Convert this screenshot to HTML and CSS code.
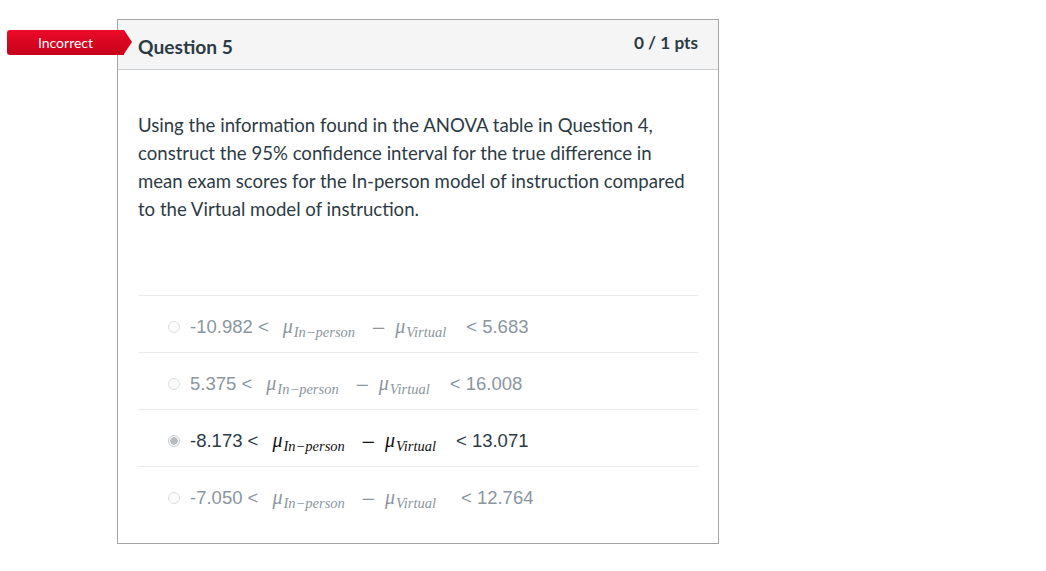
FILE: index.html
```html
<!DOCTYPE html>
<html>
<head>
<meta charset="utf-8">
<link rel="stylesheet" href="styles.css">
</head>
<body>
<div class="page">
  <div class="badge">Incorrect</div>
  <div class="card">
    <div class="card-header">
      <h2 class="title">Question 5</h2>
      <div class="pts">0 / 1 pts</div>
    </div>
    <div class="card-body">
      <p class="question">Using the information found in the ANOVA table in Question 4, construct the 95% confidence interval for the true difference in mean exam scores for the In-person model of instruction compared to the Virtual model of instruction.</p>
      <div class="answers">
        <div class="answer">
          <span class="radio"></span>
          <span class="num">-10.982 &lt;</span>
          <span class="mu">μ<sub>In−person</sub></span>
          <span class="minus">−</span>
          <span class="mu mu2">μ<sub>Virtual</sub></span>
          <span class="num">&lt; 5.683</span>
        </div>
        <div class="answer">
          <span class="radio"></span>
          <span class="num">5.375 &lt;</span>
          <span class="mu">μ<sub>In−person</sub></span>
          <span class="minus">−</span>
          <span class="mu mu2">μ<sub>Virtual</sub></span>
          <span class="num">&lt; 16.008</span>
        </div>
        <div class="answer selected">
          <span class="radio"></span>
          <span class="num">-8.173 &lt;</span>
          <span class="mu">μ<sub>In−person</sub></span>
          <span class="minus">−</span>
          <span class="mu mu2">μ<sub>Virtual</sub></span>
          <span class="num">&lt; 13.071</span>
        </div>
        <div class="answer">
          <span class="radio"></span>
          <span class="num">-7.050 &lt;</span>
          <span class="mu">μ<sub>In−person</sub></span>
          <span class="minus">−</span>
          <span class="mu mu2">μ<sub>Virtual</sub></span>
          <span class="num wide">&lt; 12.764</span>
        </div>
      </div>
    </div>
  </div>
</div>
</body>
</html>
```
FILE: styles.css
```css
html, body {
  margin: 0;
  padding: 0;
  background: #ffffff;
}
body {
  font-family: Lato, "Open Sans", sans-serif;
  color: #2d3b45;
}
.page {
  position: relative;
  padding: 19px 0 0 117px;
}
.badge {
  position: absolute;
  left: 7px;
  top: 30px;
  width: 117px;
  height: 25px;
  box-sizing: border-box;
  text-align: center;
  line-height: 25px;
  font-size: 14px;
  color: #ffffff;
  background: linear-gradient(#ec0b28, #c5001a);
  border-radius: 3px 0 0 3px;
  z-index: 2;
}
.badge::after {
  content: "";
  position: absolute;
  right: -8px;
  top: 0;
  border-top: 12.5px solid transparent;
  border-bottom: 12.5px solid transparent;
  border-left: 8px solid #d9041f;
}
.card {
  width: 600px;
  height: 523px;
  border: 1px solid #a5a5a5;
  display: flex;
  flex-direction: column;
}
.card-header {
  height: 49px;
  background: #f5f5f5;
  border-bottom: 1px solid #c7cdd1;
  display: flex;
  justify-content: space-between;
  padding: 0 20px;
}
.title {
  margin: 0;
  font-size: 19.2px;
  font-weight: 700;
  line-height: 20px;
  padding-top: 17px;
}
.pts {
  font-size: 17.2px;
  font-weight: 700;
  line-height: 20px;
  padding-top: 13px;
  color: #2d3b45;
}
.card-body {
  padding: 0 20px;
}
.question {
  margin: 41px 0 0 0;
  font-size: 18.6px;
  line-height: 28px;
  width: 560px;
}
.answers {
  margin-top: 72px;
}
.answer {
  height: 57px;
  border-top: 1px solid #e8eaec;
  display: flex;
  align-items: center;
  padding-left: 30px;
  padding-top: 6px;
  box-sizing: border-box;
  color: #8b969e;
  font-family: "Liberation Sans", Arial, sans-serif;
  font-size: 18.5px;
}
.answer.selected {
  color: #2d3b45;
}
.radio {
  width: 10px;
  height: 10px;
  border: 1px solid #dcdfe2;
  border-radius: 50%;
  margin-right: 10px;
  background: #fbfbfb;
}
.answer.selected .radio {
  background: radial-gradient(circle, #b8bcc0 0 3.5px, #fbfbfb 4px);
  border-color: #c9cdd1;
}
.mu {
  font-family: "Liberation Serif", "Times New Roman", serif;
  font-style: italic;
  font-size: 20px;
  margin-left: 14px;
  color: #8b969e;
}
.selected .mu, .selected .minus {
  color: #111111;
}
.mu sub {
  font-size: 14.5px;
  vertical-align: -4px;
  line-height: 1;
  margin-left: 1px;
}
.minus {
  font-family: "DejaVu Serif", serif;
  font-size: 18px;
  margin-left: 16px;
  color: #8b969e;
}
.mu2 {
  margin-left: 9px;
}
.mu2 + .num {
  margin-left: 20px;
}
.mu2 + .num.wide {
  margin-left: 25px;
}
```
